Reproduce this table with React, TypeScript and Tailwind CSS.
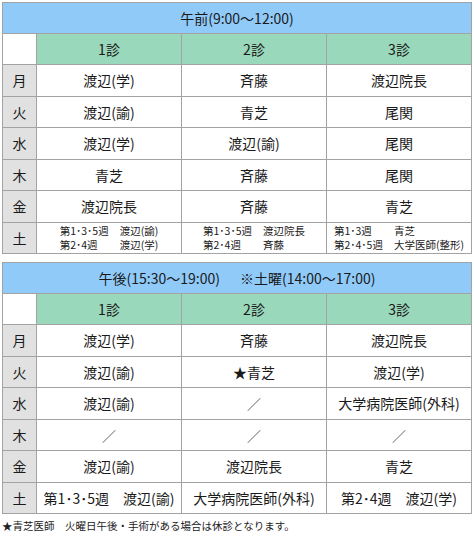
import React from "react";

const font = { fontFamily: '"Noto Sans CJK JP", "Noto Sans", sans-serif' };

type Cell = string | { pairs: [string, string][] };

const am: { day: string; cells: Cell[] }[] = [
  { day: "月", cells: ["渡辺(学)", "斉藤", "渡辺院長"] },
  { day: "火", cells: ["渡辺(諭)", "青芝", "尾関"] },
  { day: "水", cells: ["渡辺(学)", "渡辺(諭)", "尾関"] },
  { day: "木", cells: ["青芝", "斉藤", "尾関"] },
  { day: "金", cells: ["渡辺院長", "斉藤", "青芝"] },
  {
    day: "土",
    cells: [
      { pairs: [["第1･3･5週", "渡辺(諭)"], ["第2･4週", "渡辺(学)"]] },
      { pairs: [["第1･3･5週", "渡辺院長"], ["第2･4週", "斉藤"]] },
      { pairs: [["第1･3週", "青芝"], ["第2･4･5週", "大学医師(整形)"]] },
    ],
  },
];

const pm: { day: string; cells: Cell[] }[] = [
  { day: "月", cells: ["渡辺(学)", "斉藤", "渡辺院長"] },
  { day: "火", cells: ["渡辺(諭)", "★青芝", "渡辺(学)"] },
  { day: "水", cells: ["渡辺(諭)", "／", "大学病院医師(外科)"] },
  { day: "木", cells: ["／", "／", "／"] },
  { day: "金", cells: ["渡辺(諭)", "渡辺院長", "青芝"] },
  { day: "土", cells: ["第1･3･5週　渡辺(諭)", "大学病院医師(外科)", "第2･4週　渡辺(学)"] },
];

function CellContent({ c }: { c: Cell }) {
  if (typeof c === "string") {
    if (c === "／")
      return <span className="inline-block text-[#333] opacity-80 [will-change:transform]">／</span>;
    return <span className="whitespace-nowrap">{c}</span>;
  }
  return (
    <div className="flex justify-center text-[10.5px] leading-[13.5px] whitespace-nowrap">
      <div className="grid grid-cols-[60px_auto] text-left">
        {c.pairs.map(([a, b], i) => (
          <React.Fragment key={i}>
            <span>{a}</span>
            <span>{b}</span>
          </React.Fragment>
        ))}
      </div>
    </div>
  );
}

function Schedule({ title, rows }: { title: React.ReactNode; rows: { day: string; cells: Cell[] }[] }) {
  const bd = "border border-[#a3a3a3] p-0 leading-[16px]";
  return (
    <table className="table-fixed border-collapse w-[469px] text-[14px] text-[#1a1a1a]">
      <colgroup>
        <col className="w-[34px]" />
        <col className="w-[145px]" />
        <col className="w-[145px]" />
        <col className="w-[145px]" />
      </colgroup>
      <tbody>
        <tr className="h-[31px]">
          <td colSpan={4} className={`${bd} bg-[#90caf9] text-center`}>
            {title}
          </td>
        </tr>
        <tr className="h-[31px]">
          <td className={`${bd} bg-white`}></td>
          {["1診", "2診", "3診"].map((h) => (
            <td key={h} className={`${bd} bg-[#9ad8bb] text-center`}>
              {h}
            </td>
          ))}
        </tr>
        {rows.map((r) => (
          <tr key={r.day} className="h-[31.5px]">
            <td className={`${bd} bg-[#e1e1e1] text-center`}>{r.day}</td>
            {r.cells.map((c, i) => (
              <td key={i} className={`${bd} bg-white text-center`}>
                <CellContent c={c} />
              </td>
            ))}
          </tr>
        ))}
      </tbody>
    </table>
  );
}

export default function App() {
  return (
    <div className="w-[474px] h-[536px] bg-white pt-[2px] pl-[2px]" style={font}>
      <Schedule title="午前(9:00～12:00)" rows={am} />
      <div className="h-[8px]" />
      <Schedule
        title={
          <span>
            午後(15:30～19:00)<span className="inline-block w-[20px]" />※土曜(14:00～17:00)
          </span>
        }
        rows={pm}
      />
      <div className="text-[10.5px] text-[#222] mt-[5px] leading-[14px] whitespace-nowrap">
        ★青芝医師　火曜日午後・手術がある場合は休診となります。
      </div>
    </div>
  );
}
